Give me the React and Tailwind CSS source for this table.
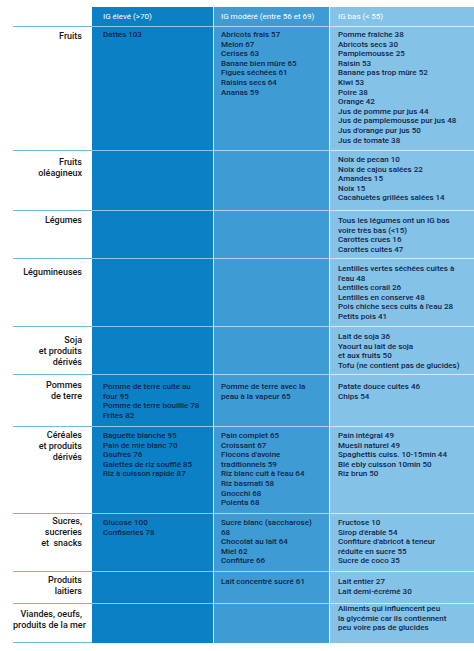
const rows = [
  {
    label: ['Fruits'],
    h: 'h-[124px]',
    lpt: 'pt-[4px]',
    pt: 'pt-[3px]',
    high: ['Dattes 103'],
    mid: ['Abricots frais 57', 'Melon 67', 'Cerises 63', 'Banane bien mûre 65', 'Figues séchées 61', 'Raisins secs 64', 'Ananas 59'],
    low: [
      'Pomme fraîche 38',
      'Abricots secs 30',
      'Pamplemousse 25',
      'Raisin 53',
      'Banane pas trop mûre 52',
      'Kiwi 53',
      'Poire 38',
      'Orange 42',
      'Jus de pomme pur jus 44',
      'Jus de pamplemousse pur jus 48',
      "Jus d'orange pur jus 50",
      'Jus de tomate 38',
    ],
  },
  {
    label: ['Fruits', 'oléagineux'],
    h: 'h-[60px]',
    lpt: 'pt-[6px]',
    pt: 'pt-[4px]',
    high: [],
    mid: [],
    low: ['Noix de pecan 10', 'Noix de cajou salées 22', 'Amandes 15', 'Noix 15', 'Cacahuètes grillées salées 14'],
  },
  {
    label: ['Légumes'],
    h: 'h-[48px]',
    lpt: 'pt-[4px]',
    pt: 'pt-[5px]',
    high: [],
    mid: [],
    low: ['Tous les légumes ont un IG bas', 'voire très bas (<15)', 'Carottes crues 16', 'Carottes cuites 47'],
  },
  {
    label: ['Légumineuses'],
    h: 'h-[68px]',
    lpt: 'pt-[8px]',
    pt: 'pt-[5px]',
    high: [],
    mid: [],
    low: [
      'Lentilles vertes séchées cuites à',
      "l'eau 48",
      'Lentilles corail 26',
      'Lentilles en conserve 48',
      "Pois chiche secs cuits à l'eau 28",
      'Petits pois 41',
    ],
  },
  {
    label: ['Soja', 'et produits', 'dérivés'],
    h: 'h-[48px]',
    lpt: 'pt-[8px]',
    pt: 'pt-[5px]',
    high: [],
    mid: [],
    low: ['Lait de soja 36', 'Yaourt au lait de soja', 'et aux fruits 50', 'Tofu (ne contient pas de glucides)'],
  },
  {
    label: ['Pommes', 'de terre'],
    h: 'h-[52px]',
    lpt: 'pt-[5px]',
    pt: 'pt-[7px]',
    high: ['Pomme de terre cuite au', 'four 95', 'Pomme de terre bouillie 78', 'Frites 82'],
    mid: ['Pomme de terre avec la', 'peau à la vapeur 65'],
    low: ['Patate douce cuites 46', 'Chips 54'],
  },
  {
    label: ['Céréales', 'et produits', 'dérivés'],
    h: 'h-[87px]',
    lpt: 'pt-[3px]',
    pt: 'pt-[4px]',
    high: ['Baguette blanche 95', 'Pain de mie blanc 70', 'Gaufres 76', 'Galettes de riz soufflé 85', 'Riz à cuisson rapide 87'],
    mid: [
      'Pain complet 65',
      'Croissant 67',
      "Flocons d'avoine",
      'traditionnels 59',
      "Riz blanc cuit à l'eau 64",
      'Riz basmati 58',
      'Gnocchi 68',
      'Polenta 68',
    ],
    low: ['Pain intégral 49', 'Muesli naturel 49', 'Spaghettis cuiss. 10-15min 44', 'Blé ebly cuisson 10min 50', 'Riz brun 50'],
  },
  {
    label: ['Sucres,', 'sucreries', 'et\u00a0\u00a0snacks'],
    h: 'h-[58px]',
    lpt: 'pt-[2px]',
    pt: 'pt-[4px]',
    high: ['Glucose 100', 'Confiseries 78'],
    mid: ['Sucre blanc (saccharose)', '68', 'Chocolat au lait 64', 'Miel 62', 'Confiture 66'],
    low: ['Fructose 10', "Sirop d'érable 54", "Confiture d'abricot à teneur", 'réduite en sucre 55', 'Sucre de coco 35'],
  },
  {
    label: ['Produits', 'laitiers'],
    h: 'h-[32px]',
    lpt: 'pt-[3px]',
    pt: 'pt-[5px]',
    high: [],
    mid: ['Lait concentré sucré 61'],
    low: ['Lait entier 27', 'Lait demi-écrémé 30'],
  },
  {
    label: ['Viandes, oeufs,', 'produits de la mer'],
    h: 'h-[40px]',
    lpt: 'pt-[5px]',
    pt: 'pt-0',
    high: [],
    mid: [],
    low: ['Aliments qui influencent peu', 'la glycémie car ils contiennent', 'peu voire pas de glucides'],
    last: true,
  },
];

function Lines({ items }) {
  return items.map((line, i) => (
    <div key={i} className="whitespace-nowrap">
      {line}
    </div>
  ));
}

export default function App() {
  return (
    <div
      className="w-[474px] h-[651px] bg-white pt-[7px] overflow-hidden"
      style={{ fontFamily: 'Roboto, "Noto Sans", sans-serif' }}
    >
      {/* header */}
      <div className="grid grid-cols-[92px_121px_116px_145px] h-[19px] text-[8px] text-white">
        <div />
        <div className="bg-[#0b80c4] pl-[11px] flex items-center">IG élevé (&gt;70)</div>
        <div className="bg-[#3e9bd4] border-l border-[#cfe6f5] pl-[7px] flex items-center">
          IG modéré (entre 56 et 69)
        </div>
        <div className="bg-[#84c2e7] border-l border-[#e3f1fa] pl-[8px] flex items-center">IG bas (&lt; 55)</div>
      </div>

      {rows.map((row, i) => (
        <div key={i} className={`grid grid-cols-[92px_121px_116px_145px] ${row.h}`}>
          <div className="pl-[13px]">
            <div
              className={`h-full border-t border-[#72b8e0] pr-[10px] text-right text-[9px] leading-[11px] font-medium text-[#161616] ${row.lpt} ${
                row.last ? 'border-b' : ''
              }`}
            >
              <Lines items={row.label} />
            </div>
          </div>
          <div
            className={`bg-[#0b80c4] border-t border-[#8ac9ee] pl-[11px] text-[8px] leading-[9.6px] font-medium text-[#11254a] ${row.pt}`}
          >
            <Lines items={row.high} />
          </div>
          <div
            className={`bg-[#3e9bd4] border-t border-l border-t-[#a9d5f0] border-l-[#cfe6f5] pl-[7px] text-[8px] leading-[9.6px] font-medium text-[#11254a] ${row.pt}`}
          >
            <Lines items={row.mid} />
          </div>
          <div
            className={`bg-[#84c2e7] border-t border-l border-t-[#d3eaf8] border-l-[#e3f1fa] pl-[8px] text-[8px] leading-[9.6px] font-medium text-[#11254a] ${row.pt}`}
          >
            <Lines items={row.low} />
          </div>
        </div>
      ))}
    </div>
  );
}
